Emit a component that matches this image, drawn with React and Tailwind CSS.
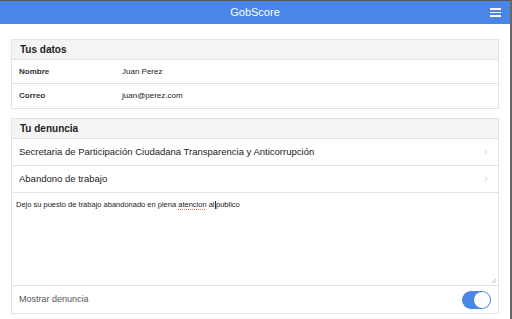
import { ChevronRight } from "lucide-react";

const datos = [
  ["Nombre", "Juan Perez"],
  ["Correo", "juan@perez.com"]
];

const Card = ({ title, children, className = "" }) => (
  <section className={`border border-[#e2e2e2] bg-white ${className}`}>
    <div className="flex h-[20px] items-center border-b border-[#e2e2e2] bg-[#f4f4f4] px-[8px] text-[10px] font-bold text-[#222]">
      {title}
    </div>
    {children}
  </section>
);

export default function App() {
  return (
    <div
      className="relative h-[319px] w-[512px] overflow-hidden border-t border-r-2 border-t-[#555] border-r-[#666] bg-white"
      style={{ fontFamily: '"Liberation Sans", Arial, sans-serif' }}
    >
      <header className="relative flex h-[23px] items-center justify-center bg-[#4a86e8] text-[11px] text-white">
        GobScore
        <span className="absolute right-[9px] top-[7px] flex w-[11px] flex-col gap-[2px]">
          <span className="h-[1.5px] bg-white" />
          <span className="h-[1.5px] bg-white" />
          <span className="h-[1.5px] bg-white" />
        </span>
      </header>

      <div className="px-[11px] pt-[15px]">
        <Card title="Tus datos">
          {datos.map(([label, value], i) => (
            <div
              key={label}
              className={`flex h-[24px] items-center px-[7px] text-[8px] text-[#222] ${i === 0 ? "border-b border-[#e2e2e2]" : ""}`}
            >
              <span className="w-[103px] font-bold text-[#333]">{label}</span>
              <span>{value}</span>
            </div>
          ))}
        </Card>

        <Card title="Tu denuncia" className="mt-[9px]">
          {["Secretaria de Participación Ciudadana Transparencia y Anticorrupción", "Abandono de trabajo"].map((t) => (
            <div key={t} className="flex h-[27px] items-center justify-between border-b border-[#e2e2e2] pl-[7px] pr-[8px] text-[9.5px] text-[#222]">
              <span>{t}</span>
              <ChevronRight className="h-[8px] w-[8px] text-[#bbb]" strokeWidth={2} />
            </div>
          ))}
          <div className="relative h-[93px] border-b border-[#e2e2e2] px-[4px] pt-[6px] text-[7.5px] text-[#222]">
            Dejo su puesto de trabajo abandonado en plena{" "}
            <span className="underline decoration-red-400 decoration-dotted underline-offset-2">atencion</span> al<span className="mx-[0.5px] inline-block h-[8px] w-[0.5px] bg-[#333] align-middle" />publico
            <svg className="absolute bottom-[1px] right-[1px]" width="6" height="6" viewBox="0 0 6 6">
              <path d="M1 5L5 1M3 5L5 3" stroke="#aaa" strokeWidth="0.7" />
            </svg>
          </div>
          <div className="flex h-[27px] items-center justify-between pl-[7px] pr-[7px] text-[9px] text-[#555]">
            <span>Mostrar denuncia</span>
            <span className="flex h-[18px] w-[29px] items-center justify-end rounded-full bg-[#4a86e8] px-[1px]">
              <span className="h-[16px] w-[16px] rounded-full bg-white" />
            </span>
          </div>
        </Card>
      </div>
    </div>
  );
}
